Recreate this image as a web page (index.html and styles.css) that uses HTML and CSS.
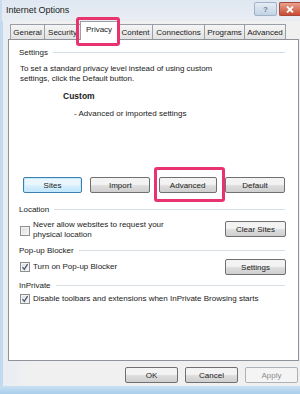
FILE: index.html
```html
<!DOCTYPE html>
<html>
<head>
<meta charset="utf-8">
<link rel="stylesheet" href="styles.css">
</head>
<body>
<div class="win">
  <div class="titlebar">
    <span class="title-text">Internet Options</span>
    <div class="ctrls">
      <span class="cbtn help">?</span>
      <span class="cbtn close"><svg width="8" height="7" viewBox="0 0 8 7"><path d="M1 0.5 L7 6.5 M7 0.5 L1 6.5" stroke="#fff" stroke-width="1.8"/></svg></span>
    </div>
  </div>
  <div class="client">
    <div class="tabs">
      <div class="tab t-general">General</div>
      <div class="tab t-security">Security</div>
      <div class="tab sel">Privacy<span class="hl hl-tab"></span></div>
      <div class="tab t-content">Content</div>
      <div class="tab t-conn">Connections</div>
      <div class="tab t-prog">Programs</div>
      <div class="tab t-adv">Advanced</div>
    </div>
    <div class="panel">
      <div class="group-label g-settings"><span>Settings</span><i></i></div>
      <p class="desc">To set a standard privacy level instead of using custom<br>settings, click the Default button.</p>
      <div class="level">Custom</div>
      <div class="level-desc">- Advanced or imported settings</div>
      <div class="btn-row">
        <span class="btn focus b-sites">Sites</span>
        <span class="btn b-import">Import</span>
        <span class="btn b-adv">Advanced<span class="hl hl-btn"></span></span>
        <span class="btn b-default">Default</span>
      </div>
      <div class="group-label g-loc"><span>Location</span><i></i></div>
      <div class="opt-row r-loc">
        <span class="cb"></span>
        <span class="opt-text">Never allow websites to request your<br>physical location</span>
        <span class="btn side">Clear Sites</span>
      </div>
      <div class="group-label g-pop"><span>Pop-up Blocker</span><i></i></div>
      <div class="opt-row r-pop">
        <span class="cb on"><svg width="8" height="8" viewBox="0 0 8 8"><path d="M1.5 4.2 L3.3 6.3 L6.6 1.2" fill="none" stroke="#4a5a78" stroke-width="1.3"/></svg></span>
        <span class="opt-text">Turn on Pop-up Blocker</span>
        <span class="btn side">Settings</span>
      </div>
      <div class="group-label g-priv"><span>InPrivate</span><i></i></div>
      <div class="opt-row r-priv">
        <span class="cb on"><svg width="8" height="8" viewBox="0 0 8 8"><path d="M1.5 4.2 L3.3 6.3 L6.6 1.2" fill="none" stroke="#4a5a78" stroke-width="1.3"/></svg></span>
        <span class="opt-text">Disable toolbars and extensions when InPrivate Browsing starts</span>
      </div>
    </div>
    <div class="footer">
      <span class="btn fbtn">OK</span>
      <span class="btn fbtn">Cancel</span>
      <span class="btn fbtn dis">Apply</span>
    </div>
  </div>
  <div class="bottom-strip"></div>
</div>
</body>
</html>
```
FILE: styles.css
```css
* { box-sizing: border-box; }
html, body { margin: 0; padding: 0; }
body {
  width: 300px;
  height: 394px;
  overflow: hidden;
  font-family: "Liberation Sans", Arial, sans-serif;
  font-size: 8px;
  color: #1a1a1a;
  background: #f0f0f0;
}
.win {
  width: 300px;
  height: 394px;
  display: flex;
  flex-direction: column;
  background: #f0f0f0;
}
.titlebar {
  height: 21px;
  display: flex;
  align-items: flex-start;
  justify-content: space-between;
  background: linear-gradient(#dfe8f2, #e8edf2);
  border-left: 2px solid #c9dcef;
}
.title-text {
  font-size: 9px;
  color: #1c1c1c;
  margin: 5px 0 0 4px;
  letter-spacing: -0.05px;
}
.ctrls {
  display: flex;
  gap: 2px;
  margin-top: 2px;
}
.cbtn {
  height: 14px;
  display: flex;
  align-items: center;
  justify-content: center;
  border-radius: 2px;
  font-size: 8px;
}
.help {
  width: 23px;
  background: linear-gradient(#e4ecf5, #c3d3e5);
  border: 1px solid #9fb2c8;
  color: #6d7f95;
  font-weight: bold;
}
.close {
  width: 21px;
  background: linear-gradient(#e9a28f, #c94a32);
  border: 1px solid #a8483a;
  border-right: none;
  border-radius: 2px 0 0 2px;
}
.client {
  flex: 1;
  display: flex;
  flex-direction: column;
  border-left: 3px solid #c3d9ee;
  background: linear-gradient(90deg, #e9eef3, #f0f0f0 30px);
}
.tabs {
  display: flex;
  align-items: flex-end;
  height: 18px;
  padding-left: 7px;
}
.tab {
  height: 15px;
  padding: 0 1px;
  display: flex;
  align-items: center;
  justify-content: center;
  border: 1px solid #9a9ea6;
  border-bottom: none;
  background: linear-gradient(#f5f5f5, #e2e2e2);
  margin-right: -1px;
  color: #222;
  white-space: nowrap;
}
.t-general { width: 35px; }
.t-security { width: 37px; }
.t-content { width: 35px; }
.t-conn { width: 53px; }
.t-prog { width: 41px; }
.t-adv { width: 42px; }
.tab.sel {
  position: relative;
  width: 38px;
  height: 19px;
  background: #fff;
  z-index: 2;
  margin: 0 0 -1px 0;
  padding-bottom: 3px;
}
.hl {
  position: absolute;
  border: 3px solid #e8336e;
  border-radius: 3px;
  pointer-events: none;
}
.hl-tab {
  left: -5px;
  top: -5px;
  width: 44px;
  height: 29px;
}
.panel {
  position: relative;
  margin: 0 1px 0 5px;
  height: 322px;
  background: #fff;
  border: 1px solid #8e9399;
  padding: 6px 13px 0 10px;
}
.group-label {
  display: flex;
  align-items: center;
  gap: 5px;
  color: #222;
  height: 12px;
}
.group-label i {
  flex: 1;
  height: 1px;
  background: #d5dfe5;
}
.desc {
  margin: 6px 0 0 1px;
  line-height: 10px;
  letter-spacing: -0.03px;
}
.level {
  margin: 7px 0 0 44px;
  font-weight: bold;
  font-size: 8.5px;
  height: 10px;
  line-height: 10px;
}
.level-desc {
  margin: 8px 0 0 55px;
  line-height: 10px;
}
.btn-row {
  display: flex;
  justify-content: space-between;
  margin: 58px 0 0 4px;
}
.btn {
  position: relative;
  height: 16px;
  display: inline-flex;
  align-items: center;
  justify-content: center;
  border: 1px solid #707070;
  border-radius: 2px;
  background: linear-gradient(#f3f3f3 45%, #dddddd 55%, #cfcfcf);
  color: #222;
}
.b-sites { width: 59px; }
.b-import { width: 60px; }
.b-adv { width: 58px; }
.b-default { width: 60px; }
.btn.focus {
  border-color: #3c7fb1;
  background: linear-gradient(#eaf6fd 45%, #d9f0fc 55%, #bee6fd);
  box-shadow: inset 0 0 0 1px #c6e8fb;
}
.hl-btn {
  left: -6px;
  top: -11px;
  width: 71px;
  height: 35px;
}
.g-loc { margin-top: 10px; }
.opt-row {
  display: flex;
  align-items: flex-start;
  margin-left: 1px;
}
.cb {
  width: 10px;
  height: 10px;
  border: 1px solid #8e8f8f;
  background: linear-gradient(135deg, #dcdcdc, #f7f7f7);
  box-shadow: inset 0 0 0 1px #f2f2f2;
  display: inline-flex;
  align-items: center;
  justify-content: center;
  flex: none;
}
.opt-text {
  margin-left: 3px;
  line-height: 10px;
  flex: 1;
}
.btn.side {
  width: 61px;
  margin-right: -1px;
}
.r-loc { margin-top: 5px; }
.r-loc .cb { margin-top: 6px; }
.r-loc .btn.side { margin-top: 1px; }
.g-pop { margin-top: 4px; }
.r-pop { margin-top: 3px; align-items: center; }
.g-priv { margin-top: 4px; }
.r-priv { margin-top: 3px; align-items: center; }
.footer {
  display: flex;
  justify-content: flex-end;
  gap: 7px;
  padding: 6px 2px 0 0;
}
.fbtn { width: 53px; }
.btn.dis {
  border-color: #adb2b5;
  background: #f4f4f4;
  color: #8d8d8d;
}
.bottom-strip {
  height: 8px;
  background: linear-gradient(#c9e0f3, #a9cdeb);
}
```
